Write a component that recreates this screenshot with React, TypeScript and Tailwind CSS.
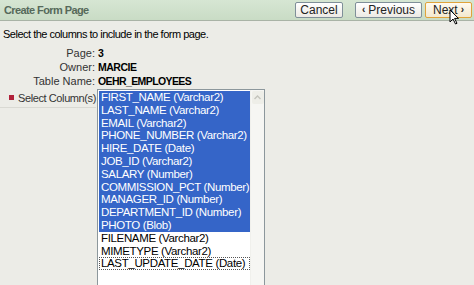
import React from "react";

const items: [string, boolean][] = [
  ["FIRST_NAME (Varchar2)", true],
  ["LAST_NAME (Varchar2)", true],
  ["EMAIL (Varchar2)", true],
  ["PHONE_NUMBER (Varchar2)", true],
  ["HIRE_DATE (Date)", true],
  ["JOB_ID (Varchar2)", true],
  ["SALARY (Number)", true],
  ["COMMISSION_PCT (Number)", true],
  ["MANAGER_ID (Number)", true],
  ["DEPARTMENT_ID (Number)", true],
  ["PHOTO (Blob)", true],
  ["FILENAME (Varchar2)", false],
  ["MIMETYPE (Varchar2)", false],
  ["LAST_UPDATE_DATE (Date)", false],
];

export default function App() {
  return (
    <div
      className="w-[474px] h-[285px] overflow-hidden bg-[#ecece7] text-black"
      style={{ fontFamily: '"Liberation Sans", Arial, sans-serif' }}
    >
      <div className="h-[21px] flex items-center justify-between bg-gradient-to-b from-[#d6e6d3] to-[#c9dcc5] border-b border-[#a9b3a6]">
        <div className="pl-[4px] text-[11px] font-bold text-[#56695a] tracking-[-0.6px]">Create Form Page</div>
        <div className="flex items-center pr-[2px]">
          <button className="h-[16px] w-[48px] mr-[12px] rounded-[2px] border border-[#7f8f99] bg-gradient-to-b from-white to-[#eceae4] text-[12px] leading-[14px] text-[#222] flex items-center justify-center">
            Cancel
          </button>
          <button className="h-[16px] w-[67px] mr-[3px] rounded-[2px] border border-[#7f8f99] bg-gradient-to-b from-white to-[#eceae4] text-[12px] leading-[14px] text-[#222] flex items-center justify-center">
            <span className="mr-[3px] text-[10px] font-bold">‹</span>Previous
          </button>
          <button className="h-[16px] w-[47px] rounded-[2px] border border-[#e0a33a] bg-gradient-to-b from-[#fffaf0] to-[#f3e8cf] text-[12px] leading-[14px] text-[#222] flex items-center justify-center relative">
            Next<span className="ml-[3px] text-[10px] font-bold">›</span>
            <svg className="absolute left-[23px] top-[6px]" width="10" height="16" viewBox="0 0 10 16">
              <path d="M1 1 L1 13 L4 10 L6.5 15 L8 14.3 L5.6 9.4 L9.5 9.4 Z" fill="white" stroke="black" strokeWidth="1" />
            </svg>
          </button>
        </div>
      </div>
      <div className="pl-[3px] pt-[7px] text-[11px] leading-[13px] tracking-[-0.5px]">Select the columns to include in the form page.</div>
      <div className="mt-[5px] text-[11px] leading-[14px]">
        <div className="flex">
          <div className="w-[95px] text-right text-[#333]">Page:</div>
          <div className="pl-[3px] font-bold text-[10.5px] tracking-[-0.5px]">3</div>
        </div>
        <div className="flex">
          <div className="w-[95px] text-right text-[#333]">Owner:</div>
          <div className="pl-[3px] font-bold text-[10.5px] tracking-[-0.5px]">MARCIE</div>
        </div>
        <div className="flex">
          <div className="w-[95px] text-right text-[#333]">Table Name:</div>
          <div className="pl-[3px] font-bold text-[10.5px] tracking-[-0.6px]">OEHR_EMPLOYEES</div>
        </div>
      </div>
      <div className="flex mt-[1px]">
        <div className="w-[96px] flex items-start pt-[3px] h-[19px] border-b border-[#d9d9d3]">
          <div className="ml-[9px] mt-[3px] w-[5px] h-[5px] bg-[#b1213a]" />
          <div className="ml-[4px] text-[11px] leading-[13px] text-[#333] whitespace-nowrap tracking-[-0.4px]">Select Column(s)</div>
        </div>
        <div className="ml-[1px] w-[168px] h-[200px] border border-[#8c979c] bg-white flex">
          <div className="flex-1 pt-[1px] pl-[1px]">
            {items.map(([t, sel], i) => (
              <div
                key={i}
                className={`h-[12.8px] leading-[12.8px] text-[11.5px] pl-[2px] tracking-[-0.35px] whitespace-nowrap ${
                  sel ? "bg-[#3565c8] text-white" : "text-black"
                } ${i === items.length - 1 ? "outline outline-1 outline-dotted outline-[#555] -outline-offset-1" : ""}`}
              >
                {t}
              </div>
            ))}
          </div>
          <div className="w-[14px] bg-[#f6f6f3] border-l border-[#f0f0ec] flex flex-col items-center">
            <div className="mt-[1px] w-[12px] h-[13px] bg-[#eeeee8] rounded-[2px] flex items-center justify-center">
              <svg width="7" height="5" viewBox="0 0 7 5">
                <path d="M0.5 4 L3.5 1 L6.5 4" fill="none" stroke="#c4c4bc" strokeWidth="1.4" />
              </svg>
            </div>
          </div>
        </div>
      </div>
    </div>
  );
}
